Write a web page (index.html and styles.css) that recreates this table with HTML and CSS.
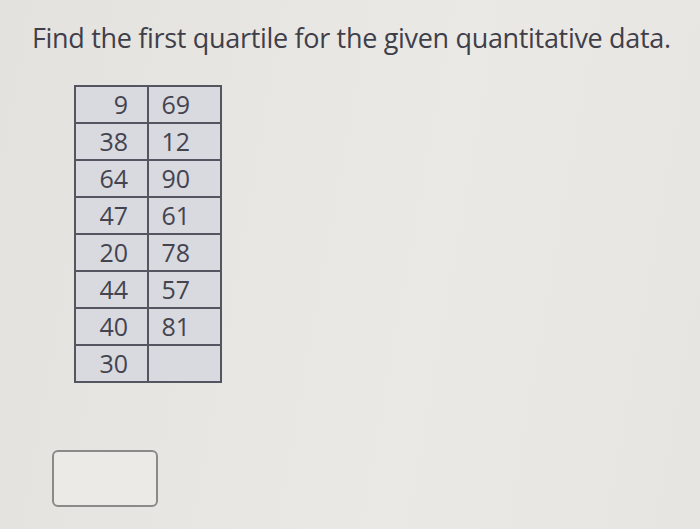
FILE: index.html
```html
<!DOCTYPE html>
<html>
<head>
<meta charset="utf-8">
<link rel="stylesheet" href="styles.css">
</head>
<body>
<div class="page">
  <h1 class="question">Find the first quartile for the given quantitative data.</h1>
  <table class="data">
    <tr><td>9</td><td>69</td></tr>
    <tr><td>38</td><td>12</td></tr>
    <tr><td>64</td><td>90</td></tr>
    <tr><td>47</td><td>61</td></tr>
    <tr><td>20</td><td>78</td></tr>
    <tr><td>44</td><td>57</td></tr>
    <tr><td>40</td><td>81</td></tr>
    <tr><td>30</td><td></td></tr>
  </table>
  <div class="answer"></div>
</div>
</body>
</html>
```
FILE: styles.css
```css
html, body {
  margin: 0;
  padding: 0;
}
body {
  width: 700px;
  height: 529px;
  overflow: hidden;
  background: linear-gradient(100deg, #e4e2de 0%, #ebe9e5 60%, #e7e5e1 100%);
  font-family: "Open Sans", "DejaVu Sans", sans-serif;
  color: #4a4a55;
}
.page {
  padding: 20px 0 0 32px;
}
.question {
  margin: 0;
  font-weight: 500;
  font-size: 27px;
  line-height: 36px;
  color: #3f3f4a;
  letter-spacing: -0.32px;
}
.data {
  margin: 29px 0 0 42px;
  border-collapse: collapse;
  background: #d9d9e0;
}
.data td {
  border: 2px solid #555561;
  width: 73px;
  height: 35.4px;
  padding: 0;
  font-size: 25px;
  font-weight: 500;
  line-height: 35px;
  text-align: right;
  color: #44444f;
  box-sizing: border-box;
}
.data td:first-child {
  padding-right: 19px;
}
.data td:last-child {
  padding-right: 30px;
}
.answer {
  margin: 67px 0 0 20px;
  width: 102px;
  height: 53px;
  border: 2px solid #8c8a88;
  border-radius: 6px;
  background: #eceae6;
}
```
